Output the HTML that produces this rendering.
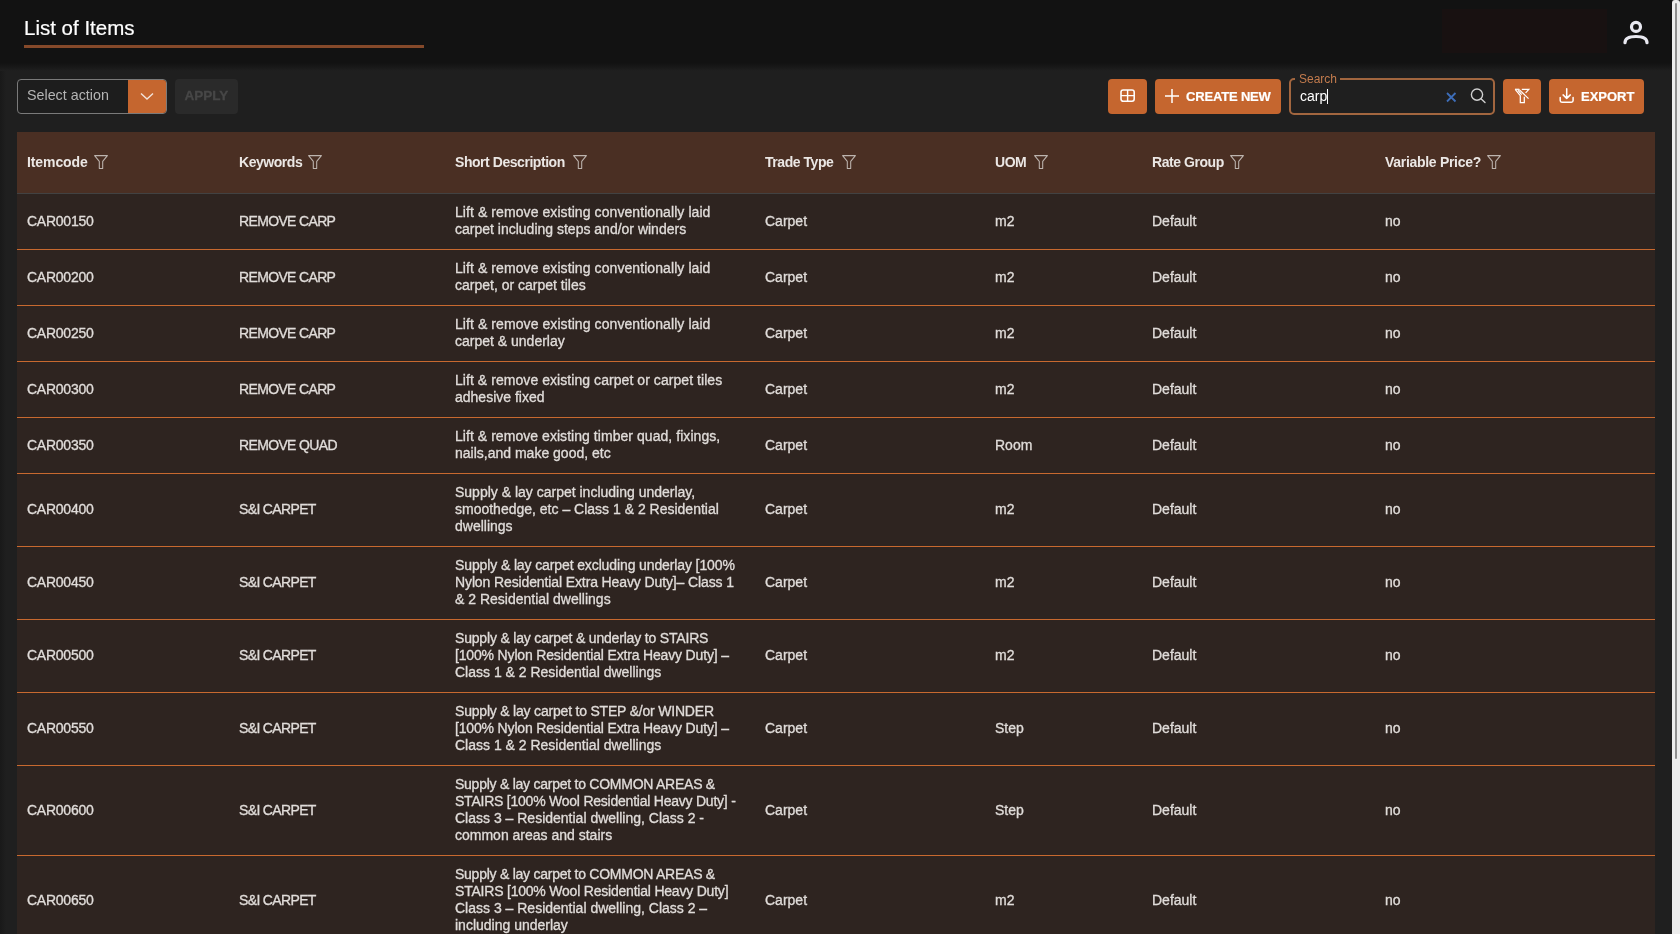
<!DOCTYPE html>
<html><head><meta charset="utf-8">
<style>
*{box-sizing:border-box;margin:0;padding:0}
html,body{width:1680px;height:934px;overflow:hidden;will-change:transform;background:#1f1f1f;font-family:"Liberation Sans",sans-serif;color:#e2dedb}
.abs{position:absolute}
#topbar{position:absolute;left:0;top:0;width:1672px;height:63px;background:#121212}
#topshadow{position:absolute;left:0;top:63px;width:1672px;height:8px;background:linear-gradient(#121212,#1f1f1f)}
#leftshadow{position:absolute;left:0;top:63px;width:6px;height:871px;background:linear-gradient(90deg,#191919,#1f1f1f)}
#title{position:absolute;left:24px;top:16px;font-size:20.5px;line-height:24px;color:#fff;white-space:nowrap;-webkit-text-stroke:0.2px #fff}
#uline{position:absolute;left:24px;top:45px;width:400px;height:3px;background:#85492a}
#redrect{position:absolute;left:1442px;top:9px;width:165px;height:44px;background:#181111}
#scroll{position:absolute;left:1672px;top:0;width:8px;height:934px;background:#ededed;border-radius:3px 3px 0 0}
#thumb{position:absolute;left:1675px;top:3px;width:2px;height:756px;background:#8f8f8f;border-radius:1px}
.btn{position:absolute;top:79px;height:35px;background:#c5662f;border-radius:4px;color:#fff;font-weight:700;font-size:13px;line-height:35px;white-space:nowrap;-webkit-text-stroke:0.2px #fff}
#select{position:absolute;left:17px;top:79px;width:150px;height:35px;border:1px solid #7a7a7a;border-radius:4px;background:#1d1d1d;overflow:hidden}
#select .txt{position:absolute;left:9px;top:7px;font-size:14.3px;line-height:17px;color:#b4b4b4}
#select .dd{position:absolute;left:110px;top:0;width:38px;height:33px;background:#c5662f}
#apply{position:absolute;left:175px;top:79px;width:63px;height:35px;background:#2a2a2a;border-radius:4px;color:#474747;font-weight:700;font-size:13.5px;line-height:34px;text-align:center;-webkit-text-stroke:0.3px #474747}
#search{position:absolute;left:1289px;top:78px;width:206px;height:37px;border:2px solid #a2663f;border-radius:5px}
#searchlbl{position:absolute;left:1295px;top:72px;padding:0 3px 0 4px;background:#1f1f1f;font-size:12px;line-height:14px;color:#c27b4d}
#searchtxt{position:absolute;left:1300px;top:88px;font-size:14px;line-height:17px;color:#fff}
#caret{position:absolute;left:1327px;top:89px;width:1px;height:15px;background:#fff}
table{position:absolute;left:17px;top:132px;width:1638px;border-collapse:collapse;table-layout:fixed}
th,td{padding:11px 10px 10px 10px;text-align:left;vertical-align:middle;font-size:14px;line-height:17px;white-space:nowrap}
th{height:61px;background:#4a2f23;font-weight:700;color:#ebe7e4;border-bottom:1px solid #424242;letter-spacing:-0.45px}
td{background:#2e2420;border-bottom:1px solid #c8692f;color:#e0dcd9;-webkit-text-stroke:0.3px #e0dcd9}
td:nth-child(1){letter-spacing:-0.25px}
th{position:relative}
th svg{position:absolute;top:23px}
th:nth-child(1){letter-spacing:-0.1px}
th:nth-child(7){letter-spacing:-0.3px}
td:nth-child(2){letter-spacing:-0.65px}
tr.r3 td{padding-top:10px;padding-bottom:11px}
td:nth-child(3){padding:10px 10px 11px 10px}
</style></head><body>
<div id="topbar"></div>
<div id="leftshadow"></div>
<div id="topshadow"></div>
<div id="title">List of Items</div>
<div id="uline"></div>
<div id="redrect"></div>
<svg class="abs" style="left:1620px;top:17px" width="32" height="30" viewBox="0 0 32 30">
<circle cx="16" cy="9.9" r="4.5" fill="none" stroke="#e8e8f0" stroke-width="3.2"/>
<path d="M5 25.7 C5 21 10 19.5 16 19.5 C22 19.5 27 21 27 25.7" fill="none" stroke="#e8e8f0" stroke-width="3.2" stroke-linecap="round"/>
</svg>

<div id="select"><div class="txt">Select action</div><div class="dd">
<svg class="abs" style="left:11px;top:11px" width="16" height="10" viewBox="0 0 16 10"><path d="M2 2.5 L8 8 L14 2.5" fill="none" stroke="#f2e3da" stroke-width="1.4"/></svg>
</div></div>
<div id="apply">APPLY</div>

<div class="btn" style="left:1108px;width:39px">
<svg class="abs" style="left:12px;top:10px" width="16" height="14" viewBox="0 0 16 14"><rect x="1" y="0.9" width="13.2" height="11.4" rx="2.2" fill="none" stroke="#fff" stroke-width="1.55"/><path d="M7.6 1V12.3M1 6.6H14.2" stroke="#fff" stroke-width="1.45"/></svg>
</div>
<div class="btn" style="left:1155px;width:126px">
<svg class="abs" style="left:10px;top:10px" width="14" height="14" viewBox="0 0 14 14"><path d="M7 0V14M0 7H14" stroke="#fff" stroke-width="1.5"/></svg>
<span class="abs" style="left:31px;top:0;letter-spacing:-0.17px">CREATE NEW</span>
</div>
<div id="search"></div>
<div id="searchlbl">Search</div>
<div id="searchtxt">carp</div>
<div id="caret"></div>
<svg class="abs" style="left:1444px;top:90px" width="14" height="14" viewBox="0 0 14 14"><path d="M3 3L11.5 11.5M11.5 3L3 11.5" stroke="#3d6db8" stroke-width="1.8"/></svg>
<svg class="abs" style="left:1468px;top:86px" width="20" height="20" viewBox="0 0 20 20"><circle cx="9" cy="8.6" r="5.6" fill="none" stroke="#d0d0d0" stroke-width="1.4"/><path d="M13 12.8L17 16.6" stroke="#d0d0d0" stroke-width="1.4" stroke-linecap="round"/></svg>

<div class="btn" style="left:1503px;width:38px">
<svg class="abs" style="left:0;top:0" width="38" height="35" viewBox="1503 79 38 35">
<g fill="none" stroke="#fff" stroke-width="1.25" stroke-linejoin="miter" stroke-linecap="butt">
<path d="M1515 89.3H1519.3"/>
<path d="M1515.2 89.3L1520.3 95.6V102.6H1524.3V96.8"/>
<path d="M1517.9 90.1L1521.6 94.6"/>
<path d="M1521.8 89.3H1528.8L1525.6 92.9"/>
<path d="M1519.2 89.6L1528.5 98.6"/>
</g></svg>
</div>
<div class="btn" style="left:1549px;width:95px">
<svg class="abs" style="left:9px;top:8px" width="18" height="18" viewBox="0 0 18 18"><path d="M8.7 1.8V11.4M5.1 7.9L8.7 11.4L12.3 7.9" fill="none" stroke="#fff" stroke-width="1.5" stroke-linecap="round" stroke-linejoin="round"/><path d="M2.2 10.5V13.5Q2.2 15.2 3.9 15.2H13.4Q15.1 15.2 15.1 13.5V10.5" fill="none" stroke="#fff" stroke-width="1.5" stroke-linecap="round"/></svg>
<span class="abs" style="left:32px;top:0">EXPORT</span>
</div>

<table>
<colgroup><col style="width:212px"><col style="width:216px"><col style="width:310px"><col style="width:230px"><col style="width:157px"><col style="width:233px"><col style="width:280px"></colgroup>
<thead><tr>
<th>Itemcode<svg style="left:77px" width="14" height="14" viewBox="0 0 14 14"><path d="M0.6 0.6H13.4L8.7 6.4V13.5H5.3V6.4Z" fill="none" stroke="#bdb4ae" stroke-width="1.05" stroke-linejoin="round"/></svg></th>
<th>Keywords<svg style="left:79px" width="14" height="14" viewBox="0 0 14 14"><path d="M0.6 0.6H13.4L8.7 6.4V13.5H5.3V6.4Z" fill="none" stroke="#bdb4ae" stroke-width="1.05" stroke-linejoin="round"/></svg></th>
<th>Short Description<svg style="left:127.5px" width="14" height="14" viewBox="0 0 14 14"><path d="M0.6 0.6H13.4L8.7 6.4V13.5H5.3V6.4Z" fill="none" stroke="#bdb4ae" stroke-width="1.05" stroke-linejoin="round"/></svg></th>
<th>Trade Type<svg style="left:86.5px" width="14" height="14" viewBox="0 0 14 14"><path d="M0.6 0.6H13.4L8.7 6.4V13.5H5.3V6.4Z" fill="none" stroke="#bdb4ae" stroke-width="1.05" stroke-linejoin="round"/></svg></th>
<th>UOM<svg style="left:49px" width="14" height="14" viewBox="0 0 14 14"><path d="M0.6 0.6H13.4L8.7 6.4V13.5H5.3V6.4Z" fill="none" stroke="#bdb4ae" stroke-width="1.05" stroke-linejoin="round"/></svg></th>
<th>Rate Group<svg style="left:88px" width="14" height="14" viewBox="0 0 14 14"><path d="M0.6 0.6H13.4L8.7 6.4V13.5H5.3V6.4Z" fill="none" stroke="#bdb4ae" stroke-width="1.05" stroke-linejoin="round"/></svg></th>
<th>Variable Price?<svg style="left:112px" width="14" height="14" viewBox="0 0 14 14"><path d="M0.6 0.6H13.4L8.7 6.4V13.5H5.3V6.4Z" fill="none" stroke="#bdb4ae" stroke-width="1.05" stroke-linejoin="round"/></svg></th>
</tr></thead>
<tbody>
<tr><td>CAR00150</td><td>REMOVE CARP</td><td><span style="letter-spacing:0.08px">Lift &amp; remove existing conventionally laid</span><br>carpet including steps and/or winders</td><td>Carpet</td><td>m2</td><td>Default</td><td>no</td></tr>
<tr><td>CAR00200</td><td>REMOVE CARP</td><td><span style="letter-spacing:0.08px">Lift &amp; remove existing conventionally laid</span><br>carpet, or carpet tiles</td><td>Carpet</td><td>m2</td><td>Default</td><td>no</td></tr>
<tr><td>CAR00250</td><td>REMOVE CARP</td><td><span style="letter-spacing:0.08px">Lift &amp; remove existing conventionally laid</span><br>carpet &amp; underlay</td><td>Carpet</td><td>m2</td><td>Default</td><td>no</td></tr>
<tr><td>CAR00300</td><td>REMOVE CARP</td><td><span style="letter-spacing:0.06px">Lift &amp; remove existing carpet or carpet tiles</span><br>adhesive fixed</td><td>Carpet</td><td>m2</td><td>Default</td><td>no</td></tr>
<tr><td>CAR00350</td><td>REMOVE QUAD</td><td><span style="letter-spacing:0.05px">Lift &amp; remove existing timber quad, fixings,</span><br>nails,and make good, etc</td><td>Carpet</td><td>Room</td><td>Default</td><td>no</td></tr>
<tr class="r3"><td>CAR00400</td><td>S&amp;I CARPET</td><td>Supply &amp; lay carpet including underlay,<br>smoothedge, etc – Class 1 &amp; 2 Residential<br>dwellings</td><td>Carpet</td><td>m2</td><td>Default</td><td>no</td></tr>
<tr class="r3"><td>CAR00450</td><td>S&amp;I CARPET</td><td><span style="letter-spacing:-0.116px">Supply &amp; lay carpet excluding underlay [100%</span><br><span style="letter-spacing:-0.116px">Nylon Residential Extra Heavy Duty]– Class 1</span><br>&amp; 2 Residential dwellings</td><td>Carpet</td><td>m2</td><td>Default</td><td>no</td></tr>
<tr class="r3"><td>CAR00500</td><td>S&amp;I CARPET</td><td><span style="letter-spacing:-0.18px">Supply &amp; lay carpet &amp; underlay to STAIRS</span><br><span style="letter-spacing:-0.165px">[100% Nylon Residential Extra Heavy Duty] –</span><br>Class 1 &amp; 2 Residential dwellings</td><td>Carpet</td><td>m2</td><td>Default</td><td>no</td></tr>
<tr class="r3"><td>CAR00550</td><td>S&amp;I CARPET</td><td><span style="letter-spacing:-0.2px">Supply &amp; lay carpet to STEP &amp;/or WINDER</span><br><span style="letter-spacing:-0.165px">[100% Nylon Residential Extra Heavy Duty] –</span><br>Class 1 &amp; 2 Residential dwellings</td><td>Carpet</td><td>Step</td><td>Default</td><td>no</td></tr>
<tr><td>CAR00600</td><td>S&amp;I CARPET</td><td><span style="letter-spacing:-0.25px">Supply &amp; lay carpet to COMMON AREAS &amp;</span><br><span style="letter-spacing:-0.23px">STAIRS [100% Wool Residential Heavy Duty] -</span><br>Class 3 – Residential dwelling, Class 2 -<br>common areas and stairs</td><td>Carpet</td><td>Step</td><td>Default</td><td>no</td></tr>
<tr><td>CAR00650</td><td>S&amp;I CARPET</td><td><span style="letter-spacing:-0.25px">Supply &amp; lay carpet to COMMON AREAS &amp;</span><br><span style="letter-spacing:-0.21px">STAIRS [100% Wool Residential Heavy Duty]</span><br>Class 3 – Residential dwelling, Class 2 –<br>including underlay</td><td>Carpet</td><td>m2</td><td>Default</td><td>no</td></tr>
</tbody>
</table>

<div id="scroll"></div>
<div id="thumb"></div>
</body></html>
